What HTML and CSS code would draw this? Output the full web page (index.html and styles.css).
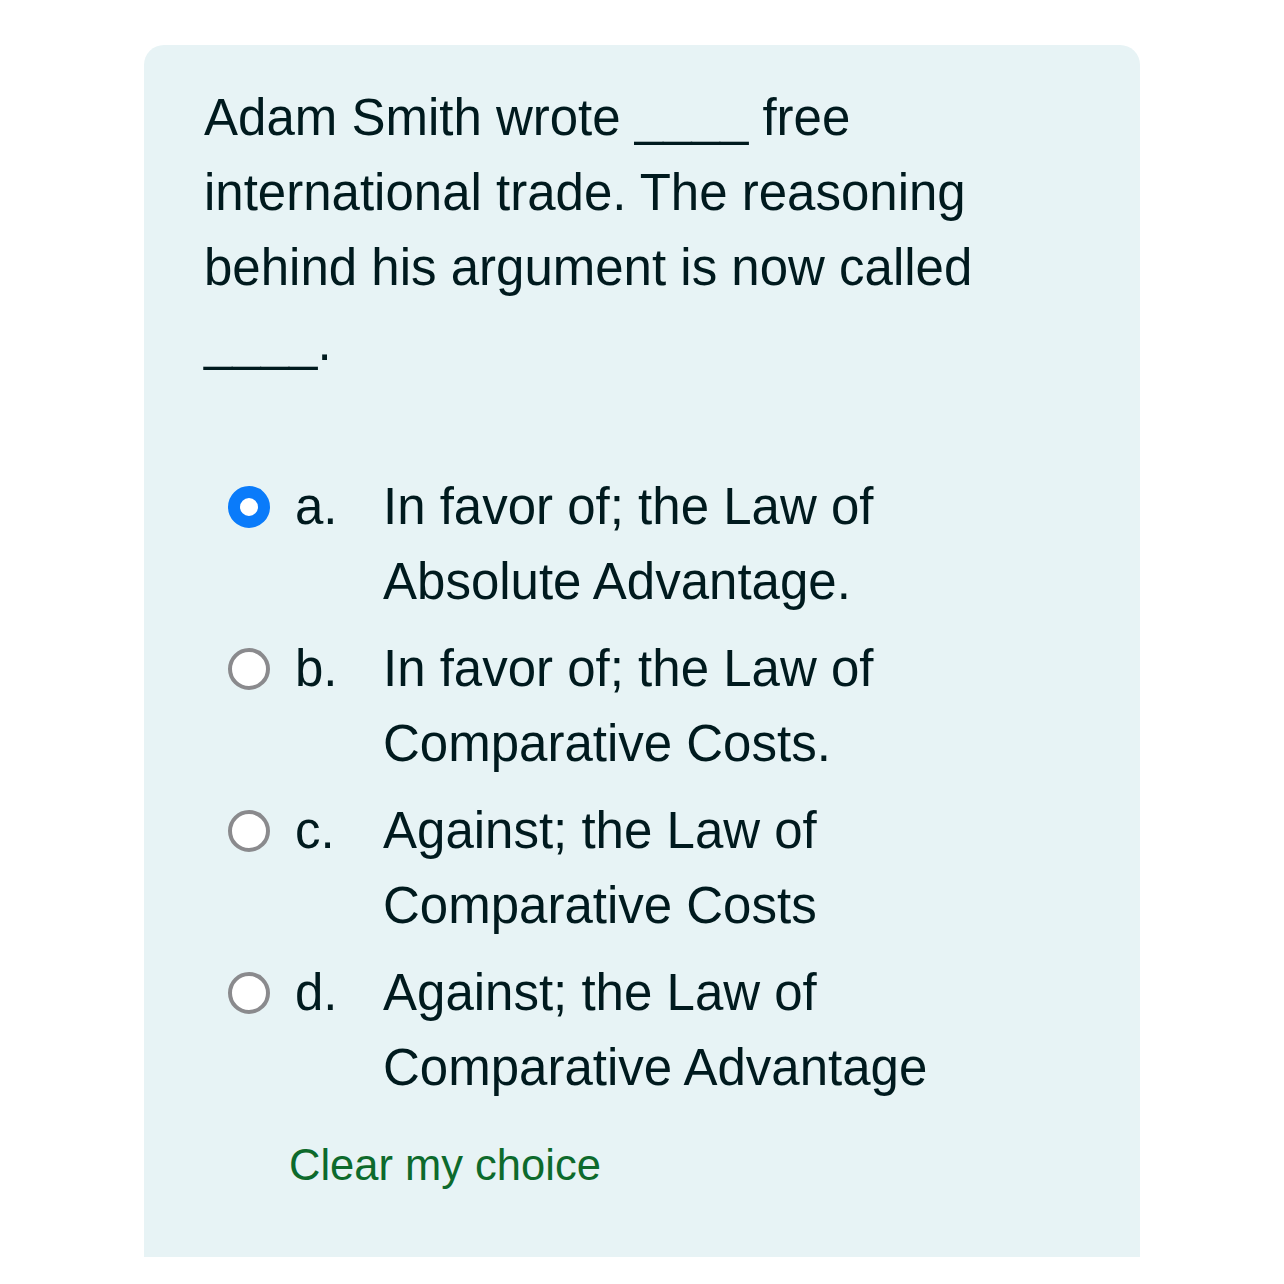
FILE: index.html
```html
<!DOCTYPE html>
<html lang="en">
<head>
<meta charset="utf-8">
<title>Question</title>
<link rel="stylesheet" href="styles.css">
</head>
<body>
<div class="page">
  <div class="card">
    <div class="qtext">Adam Smith wrote ____ free international trade. The reasoning behind his argument is now called ____.</div>
    <div class="answers">
      <div class="option">
        <span class="radio checked"></span>
        <span class="letter">a.</span>
        <span class="label">In favor of; the Law of Absolute Advantage.</span>
      </div>
      <div class="option">
        <span class="radio"></span>
        <span class="letter">b.</span>
        <span class="label">In favor of; the Law of Comparative Costs.</span>
      </div>
      <div class="option">
        <span class="radio"></span>
        <span class="letter">c.</span>
        <span class="label">Against; the Law of Comparative Costs</span>
      </div>
      <div class="option">
        <span class="radio"></span>
        <span class="letter">d.</span>
        <span class="label">Against; the Law of Comparative Advantage</span>
      </div>
    </div>
    <a class="clear" href="#">Clear my choice</a>
  </div>
</div>
</body>
</html>
```
FILE: styles.css
```css
html, body {
  margin: 0;
  padding: 0;
  background: #ffffff;
}
body {
  font-family: "Liberation Sans", Arial, Helvetica, sans-serif;
  color: #001a1e;
}
.page {
  padding: 45px 0 0 144px;
}
.card {
  width: 996px;
  height: 1212px;
  box-sizing: border-box;
  background: #e7f3f5;
  border-radius: 20px 20px 0 0;
  padding: 35px 60px 0 60px;
}
.qtext {
  font-size: 51px;
  line-height: 75px;
}
.answers {
  margin-top: 89px;
  display: flex;
  flex-direction: column;
  gap: 12px;
  padding-left: 24px;
}
.option {
  display: flex;
  align-items: flex-start;
  font-size: 51px;
  line-height: 75px;
}
.radio {
  flex: none;
  width: 42px;
  height: 42px;
  margin-top: 17px;
  box-sizing: border-box;
  border-radius: 50%;
  border: 4px solid #8a8a8d;
  background: #ffffff;
}
.radio.checked {
  border: 12px solid #0a7bfa;
}
.letter {
  flex: none;
  width: 88px;
  margin-left: 25px;
}
.label {
  max-width: 620px;
}
.clear {
  display: inline-block;
  margin-top: 28px;
  margin-left: 85px;
  font-size: 43.5px;
  line-height: 65px;
  color: #0d6a2c;
  text-decoration: none;
}
```
